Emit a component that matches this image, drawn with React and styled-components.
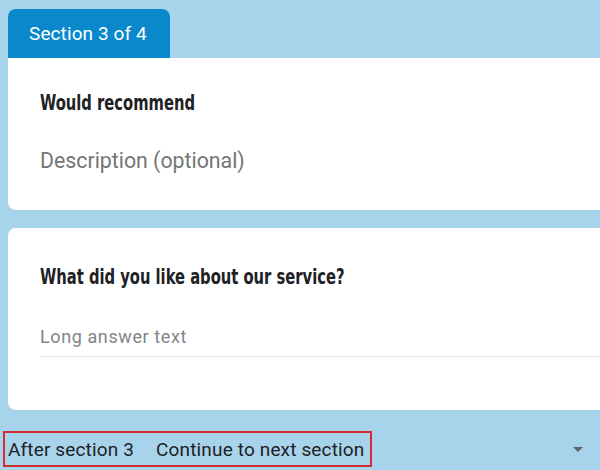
import React from "react";
import styled, { createGlobalStyle } from "styled-components";

const Global = createGlobalStyle`
  html, body {
    margin: 0;
    padding: 0;
    background: #a8d4eb;
    overflow: hidden;
  }
`;

const Page = styled.div`
  width: 600px;
  height: 470px;
  background: #a8d4eb;
  overflow: hidden;
  padding: 9px 0 0 8px;
  box-sizing: border-box;
  font-family: Roboto, "Liberation Sans", sans-serif;
`;

const Tab = styled.div`
  width: 162px;
  height: 49px;
  box-sizing: border-box;
  background: #0a88cc;
  color: #ffffff;
  border-radius: 8px 8px 0 0;
  font-size: 19px;
  letter-spacing: 0.1px;
  padding-left: 21px;
  display: flex;
  align-items: center;
`;

const Card = styled.div`
  width: 640px;
  background: #ffffff;
  border-radius: ${(p) => (p.$tabbed ? "0 0 0 8px" : "8px")};
  box-sizing: border-box;
  padding: ${(p) => p.$pad};
  height: ${(p) => p.$h}px;
  margin-bottom: ${(p) => p.$mb || 0}px;
`;

const Title = styled.div`
  display: inline-block;
  font-family: "DejaVu Sans Condensed", "DejaVu Sans", sans-serif;
  font-stretch: condensed;
  font-weight: 700;
  font-size: 22px;
  line-height: 26px;
  color: #202124;
  transform: scaleX(0.745);
  transform-origin: left center;
  white-space: nowrap;
`;

const Description = styled.div`
  margin-top: 32px;
  font-size: 21.3px;
  color: #757575;
`;

const AnswerLine = styled.div`
  margin-top: 36px;
  font-size: 18px;
  color: #80868b;
  letter-spacing: 0.6px;
  padding-bottom: 9px;
  border-bottom: 1px solid #e2e2e2;
`;

const Footer = styled.div`
  display: flex;
  align-items: center;
  justify-content: space-between;
  margin-left: -5px;
  padding-right: 17px;
  width: 597px;
  box-sizing: border-box;
`;

const Highlight = styled.div`
  border: 2px solid #d22d35;
  height: 36px;
  box-sizing: border-box;
  width: 369px;
  display: flex;
  align-items: center;
  padding-left: 3px;
  font-size: 19px;
  letter-spacing: 0.15px;
  color: #202124;
  gap: 22px;
  white-space: nowrap;
`;

const Arrow = styled.div`
  width: 0;
  height: 0;
  border-left: 5px solid transparent;
  border-right: 5px solid transparent;
  border-top: 5px solid #5f6368;
`;

export default function App() {
  return (
    <>
      <Global />
      <Page>
        <Tab>Section 3 of 4</Tab>
        <Card $tabbed $pad="32px 32px 0" $h={152} $mb={18}>
          <Title>Would recommend</Title>
          <Description>Description (optional)</Description>
        </Card>
        <Card $pad="36px 32px 0" $h={182} $mb={21}>
          <Title>What did you like about our service?</Title>
          <AnswerLine>Long answer text</AnswerLine>
        </Card>
        <Footer>
          <Highlight>
            <span>After section 3</span>
            <span>Continue to next section</span>
          </Highlight>
          <Arrow />
        </Footer>
      </Page>
    </>
  );
}
